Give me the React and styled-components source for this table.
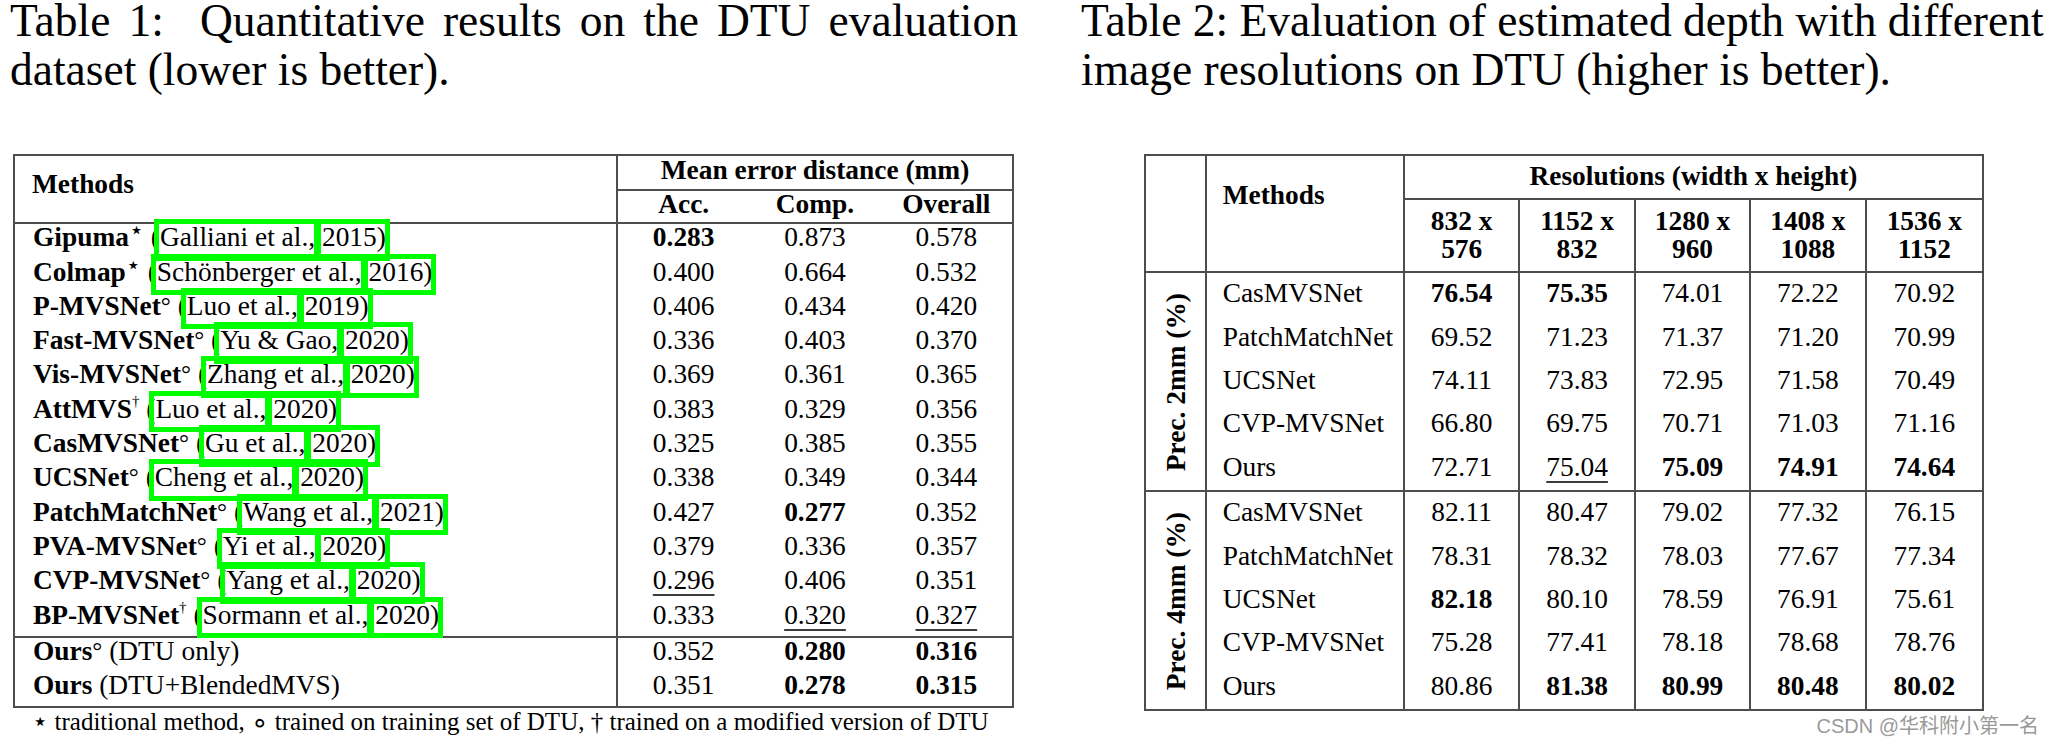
import React from "react";
import styled, { createGlobalStyle } from "styled-components";

const LINE = "#4d4d4d";
const GREEN = "#00ff00";

const GlobalStyle = createGlobalStyle`
  *, *::before, *::after { box-sizing: border-box; }
  html, body { margin: 0; padding: 0; background: #ffffff; }
  body {
    font-family: "Liberation Serif", "Times New Roman", "DejaVu Serif", serif;
    color: #000;
  }
`;

const Page = styled.div`
  display: flex;
  align-items: flex-start;
  width: 2052px;
  height: 746px;
  overflow: hidden;
  background: #fff;
`;

const Column = styled.section`
  flex: none;
  display: flex;
  flex-direction: column;
  width: ${(p) => p.$width}px;
  margin-left: ${(p) => p.$offset}px;
`;

const Caption = styled.div`
  font-size: 45.5px;
`;

const CaptionLine = styled.div`
  line-height: ${(p) => p.$lh}px;
  white-space: ${(p) => (p.$justify ? "normal" : "nowrap")};
  text-align: ${(p) => (p.$justify ? "justify" : "left")};
  text-align-last: ${(p) => (p.$justify ? "justify" : "auto")};
`;

const TableBox = styled.div`
  margin-top: 57px;
  margin-left: ${(p) => p.$indent}px;
  width: ${(p) => p.$width}px;
  border: 2px solid ${LINE};
  font-size: 27.4px;
`;

/* ---------- Table 1 ---------- */

const T1Head = styled.div`
  display: grid;
  grid-template-columns: 603px 1fr;
  border-bottom: 2px solid ${LINE};
`;

const HeadMethods = styled.div`
  border-right: 2px solid ${LINE};
  font-weight: bold;
  line-height: 30px;
  padding: ${(p) => p.$top}px 0 0 ${(p) => p.$left}px;
`;

const GroupBlock = styled.div`
  display: flex;
  flex-direction: column;
`;

const GroupTitle = styled.div`
  text-align: center;
  font-weight: bold;
  line-height: 28px;
  white-space: nowrap;
  padding: ${(p) => p.$pt}px 0 ${(p) => p.$pb}px;
  border-bottom: 2px solid ${LINE};
`;

const SubHeads = styled.div`
  display: grid;
  grid-template-columns: repeat(${(p) => p.$cols}, 1fr);
`;

const SubHead = styled.div`
  text-align: center;
  font-weight: bold;
  line-height: ${(p) => p.$lh}px;
  padding: ${(p) => p.$pt}px 0 ${(p) => p.$pb}px;
  border-right: ${(p) => (p.$divider ? `2px solid ${LINE}` : "none")};
`;

const RowGroup = styled.div`
  border-top: ${(p) => (p.$sep ? `2px solid ${LINE}` : "none")};
`;

const T1Row = styled.div`
  display: grid;
  grid-template-columns: 603px repeat(3, 1fr);
  height: 34.3px;
  line-height: 27.5px;
`;

const MethodCell = styled.div`
  border-right: 2px solid ${LINE};
  padding-left: ${(p) => p.$pad}px;
  white-space: nowrap;
`;

const MethodName = styled.span`
  font-weight: bold;
`;

const Mark = styled.span`
  font-weight: normal;
  line-height: 0;
  font-size: ${(p) => p.$size}px;
  vertical-align: ${(p) => p.$raise}px;
  font-family: ${(p) =>
    p.$sans ? '"DejaVu Sans", sans-serif' : '"Liberation Serif", serif'};
`;

const Cite = styled.span`
  position: relative;
  &::after {
    content: "";
    position: absolute;
    top: -3px;
    bottom: -8.5px;
    left: -6px;
    right: -4px;
    border: 5px solid ${GREEN};
    pointer-events: none;
  }
`;

const NumCell = styled.div`
  text-align: center;
  white-space: nowrap;
  font-weight: ${(p) => (p.$bold ? "bold" : "normal")};
  border-right: ${(p) => (p.$divider ? `2px solid ${LINE}` : "none")};
`;

const Under = styled.span`
  text-decoration: underline;
  text-decoration-thickness: 2px;
  text-underline-offset: 5px;
  text-decoration-color: #3c3c3c;
`;

const Footnote = styled.div`
  margin-top: 1px;
  padding-left: 22px;
  font-size: 25px;
  line-height: 25px;
  white-space: nowrap;
`;

const FootSym = styled.span`
  font-family: "DejaVu Sans", sans-serif;
  font-size: ${(p) => p.$size}px;
  vertical-align: ${(p) => p.$raise}px;
  line-height: 0;
`;

/* ---------- Table 2 ---------- */

const T2Head = styled.div`
  display: grid;
  grid-template-columns: 61.4px 197.6px 1fr;
  border-bottom: 2px solid ${LINE};
`;

const BlankHead = styled.div`
  border-right: 2px solid ${LINE};
`;

const Section = styled.div`
  display: flex;
  border-top: ${(p) => (p.$sep ? `2px solid ${LINE}` : "none")};
`;

const SideLabel = styled.div`
  flex: none;
  width: 61.4px;
  border-right: 2px solid ${LINE};
  display: flex;
  align-items: center;
  justify-content: center;
`;

const SideText = styled.span`
  writing-mode: vertical-rl;
  transform: rotate(180deg);
  font-weight: bold;
  white-space: nowrap;
  line-height: 30px;
`;

const SectionRows = styled.div`
  flex: 1;
  display: flex;
  flex-direction: column;
`;

const T2Row = styled.div`
  display: grid;
  grid-template-columns: 197.6px repeat(5, 1fr);
  height: 43.4px;
  line-height: 40px;
`;

const Watermark = styled.div`
  margin-top: 5px;
  padding-right: 13px;
  text-align: right;
  font-family: "Liberation Sans", "Noto Sans CJK SC", sans-serif;
  font-size: 20px;
  line-height: 20px;
  color: #9a9a9a;
  white-space: nowrap;
`;

/* ---------- data ---------- */

const t1Main = [
  ["Gipuma", "star", "Galliani et al.,", "2015)", ["*0.283", "0.873", "0.578"]],
  ["Colmap", "star", "Schönberger et al.,", "2016)", ["0.400", "0.664", "0.532"]],
  ["P-MVSNet", "ring", "Luo et al.,", "2019)", ["0.406", "0.434", "0.420"]],
  ["Fast-MVSNet", "ring", "Yu & Gao,", "2020)", ["0.336", "0.403", "0.370"]],
  ["Vis-MVSNet", "ring", "Zhang et al.,", "2020)", ["0.369", "0.361", "0.365"]],
  ["AttMVS", "dag", "Luo et al.,", "2020)", ["0.383", "0.329", "0.356"]],
  ["CasMVSNet", "ring", "Gu et al.,", "2020)", ["0.325", "0.385", "0.355"]],
  ["UCSNet", "ring", "Cheng et al.,", "2020)", ["0.338", "0.349", "0.344"]],
  ["PatchMatchNet", "ring", "Wang et al.,", "2021)", ["0.427", "*0.277", "0.352"]],
  ["PVA-MVSNet", "ring", "Yi et al.,", "2020)", ["0.379", "0.336", "0.357"]],
  ["CVP-MVSNet", "ring", "Yang et al.,", "2020)", ["_0.296", "0.406", "0.351"]],
  ["BP-MVSNet", "dag", "Sormann et al.,", "2020)", ["0.333", "_0.320", "_0.327"]],
];

const t1Ours = [
  ["Ours", "ring", "(DTU only)", ["0.352", "*0.280", "*0.316"]],
  ["Ours", null, "(DTU+BlendedMVS)", ["0.351", "*0.278", "*0.315"]],
];

const resolutions = [
  ["832 x", "576"],
  ["1152 x", "832"],
  ["1280 x", "960"],
  ["1408 x", "1088"],
  ["1536 x", "1152"],
];

const t2Sections = [
  {
    label: "Prec. 2mm (%)",
    rows: [
      ["CasMVSNet", ["*76.54", "*75.35", "74.01", "72.22", "70.92"]],
      ["PatchMatchNet", ["69.52", "71.23", "71.37", "71.20", "70.99"]],
      ["UCSNet", ["74.11", "73.83", "72.95", "71.58", "70.49"]],
      ["CVP-MVSNet", ["66.80", "69.75", "70.71", "71.03", "71.16"]],
      ["Ours", ["72.71", "_75.04", "*75.09", "*74.91", "*74.64"]],
    ],
  },
  {
    label: "Prec. 4mm (%)",
    rows: [
      ["CasMVSNet", ["82.11", "80.47", "79.02", "77.32", "76.15"]],
      ["PatchMatchNet", ["78.31", "78.32", "78.03", "77.67", "77.34"]],
      ["UCSNet", ["*82.18", "80.10", "78.59", "76.91", "75.61"]],
      ["CVP-MVSNet", ["75.28", "77.41", "78.18", "78.68", "78.76"]],
      ["Ours", ["80.86", "*81.38", "*80.99", "*80.48", "*80.02"]],
    ],
  },
];

/* ---------- helpers ---------- */

function Superscript({ kind }) {
  if (kind === "star")
    return (
      <Mark $size={24} $raise={8} $sans>
        ⋆
      </Mark>
    );
  if (kind === "ring")
    return (
      <Mark $size={25} $raise={1}>
        °
      </Mark>
    );
  if (kind === "dag")
    return (
      <Mark $size={15} $raise={12}>
        †
      </Mark>
    );
  return null;
}

function Num({ value, divider }) {
  const bold = value.startsWith("*");
  const under = value.startsWith("_");
  const text = bold || under ? value.slice(1) : value;
  return (
    <NumCell $bold={bold} $divider={divider}>
      {under ? <Under>{text}</Under> : text}
    </NumCell>
  );
}

function Table1() {
  return (
    <TableBox $indent={3} $width={1001}>
      <T1Head>
        <HeadMethods $top={13} $left={17}>
          Methods
        </HeadMethods>
        <GroupBlock>
          <GroupTitle $pt={0} $pb={5}>
            Mean error distance (mm)
          </GroupTitle>
          <SubHeads $cols={3}>
            <SubHead $lh={26} $pt={0} $pb={5.3}>
              Acc.
            </SubHead>
            <SubHead $lh={26} $pt={0} $pb={5.3}>
              Comp.
            </SubHead>
            <SubHead $lh={26} $pt={0} $pb={5.3}>
              Overall
            </SubHead>
          </SubHeads>
        </GroupBlock>
      </T1Head>
      <RowGroup>
        {t1Main.map(([name, mark, author, year, vals]) => (
          <T1Row key={name}>
            <MethodCell $pad={18}>
              <MethodName>{name}</MethodName>
              <Superscript kind={mark} /> (<Cite>{author}</Cite>{" "}
              <Cite>{year}</Cite>
            </MethodCell>
            {vals.map((v, i) => (
              <Num key={i} value={v} />
            ))}
          </T1Row>
        ))}
      </RowGroup>
      <RowGroup $sep>
        {t1Ours.map(([name, mark, note, vals]) => (
          <T1Row key={note}>
            <MethodCell $pad={18}>
              <MethodName>{name}</MethodName>
              <Superscript kind={mark} /> {note}
            </MethodCell>
            {vals.map((v, i) => (
              <Num key={i} value={v} />
            ))}
          </T1Row>
        ))}
      </RowGroup>
    </TableBox>
  );
}

function Table2() {
  return (
    <TableBox $indent={63} $width={840}>
      <T2Head>
        <BlankHead />
        <HeadMethods $top={24} $left={15.3}>
          Methods
        </HeadMethods>
        <GroupBlock>
          <GroupTitle $pt={5.75} $pb={8.25}>
            Resolutions (width x height)
          </GroupTitle>
          <SubHeads $cols={5}>
            {resolutions.map(([a, b], i) => (
              <SubHead key={a} $lh={28} $pt={6.75} $pb={8.55} $divider={i < 4}>
                {a}
                <br />
                {b}
              </SubHead>
            ))}
          </SubHeads>
        </GroupBlock>
      </T2Head>
      {t2Sections.map((sec, si) => (
        <Section key={sec.label} $sep={si > 0}>
          <SideLabel>
            <SideText>{sec.label}</SideText>
          </SideLabel>
          <SectionRows>
            {sec.rows.map(([name, vals]) => (
              <T2Row key={name}>
                <MethodCell $pad={15.3}>{name}</MethodCell>
                {vals.map((v, i) => (
                  <Num key={i} value={v} divider={i < 4} />
                ))}
              </T2Row>
            ))}
          </SectionRows>
        </Section>
      ))}
    </TableBox>
  );
}

export default function App() {
  return (
    <>
      <GlobalStyle />
      <Page>
        <Column $offset={10} $width={1008}>
          <Caption>
            <CaptionLine $justify $lh={42.8}>
              Table 1:&nbsp; Quantitative results on the DTU evaluation
            </CaptionLine>
            <CaptionLine $lh={54.2}>dataset (lower is better).</CaptionLine>
          </Caption>
          <Table1 />
          <Footnote>
            <FootSym $size={26} $raise={0}>
              ⋆
            </FootSym>{" "}
            traditional method,{" "}
            <FootSym $size={28} $raise={-2}>
              ∘
            </FootSym>{" "}
            trained on training set of DTU, † trained on a modified version of
            DTU
          </Footnote>
        </Column>
        <Column $offset={63} $width={971}>
          <Caption>
            <CaptionLine $lh={42.8}>
              Table 2: Evaluation of estimated depth with different
            </CaptionLine>
            <CaptionLine $lh={54.2}>
              image resolutions on DTU (higher is better).
            </CaptionLine>
          </Caption>
          <Table2 />
          <Watermark>CSDN @华科附小第一名</Watermark>
        </Column>
      </Page>
    </>
  );
}
